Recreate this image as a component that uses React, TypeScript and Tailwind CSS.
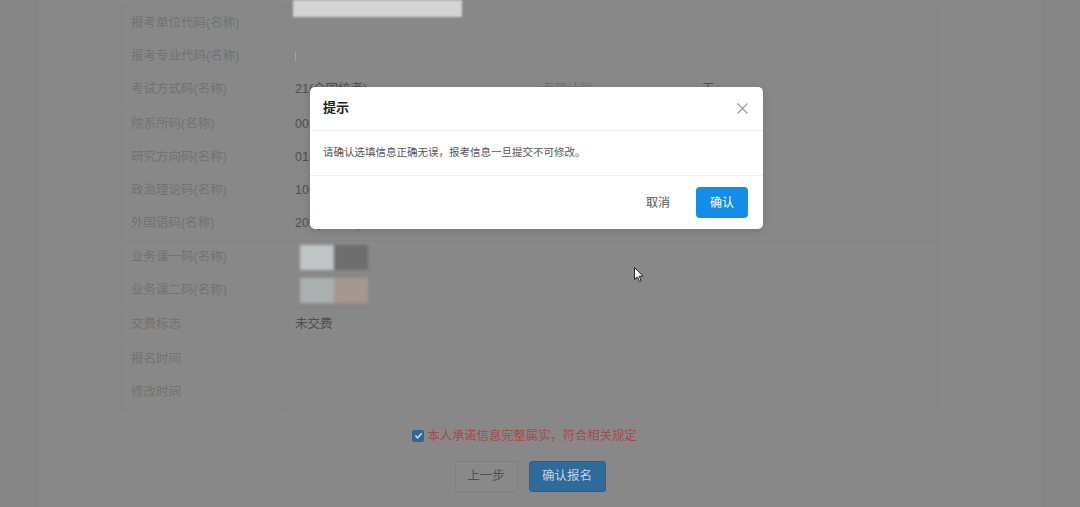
import React from "react";

type Row = { label: string; value?: React.ReactNode; label2?: string; value2?: string };

const groups: Row[][] = [
  [
    { label: "报考单位代码(名称)" },
    { label: "报考专业代码(名称)", value: <span className="inline-block w-px h-[9px] bg-[#a5a5a5] align-middle" /> },
    { label: "考试方式码(名称)", value: "21(全国统考)", label2: "专项计划", value2: "无" },
  ],
  [
    { label: "院系所码(名称)", value: "001(计算机学院)" },
    { label: "研究方向码(名称)", value: "01(不区分研究方向)" },
    { label: "政治理论码(名称)", value: "101(思想政治理论)" },
    { label: "外国语码(名称)", value: "201(英语一)" },
  ],
  [
    { label: "业务课一码(名称)", value: <Masked a="bg-[#bfc4c4]" b="bg-[#6e6e6e]" /> },
    { label: "业务课二码(名称)", value: <Masked a="bg-[#aab0b0]" b="bg-[#a69890]" /> },
  ],
  [{ label: "交费标志", value: "未交费" }],
  [{ label: "报名时间" }, { label: "修改时间" }],
];

function Masked({ a, b }: { a: string; b: string }) {
  return (
    <span className="flex h-[25px] ml-[5px] blur-[1.5px]">
      <span className={`w-[34px] h-full ${a}`} />
      <span className={`w-[34px] h-full ${b}`} />
    </span>
  );
}

export default function App() {
  return (
    <div className="relative w-full h-[507px] overflow-hidden bg-[#868686] font-['Liberation_Sans','Noto_Sans_CJK_SC',sans-serif]">
      <div className="ml-[37px] w-[1006px] h-full bg-[#888888] border-x border-[#848484] pl-[83px] pt-[6px]">
        <div className="w-[817px] border-t border-l border-r border-[#838383]">
          {groups.map((g, gi) => (
            <div key={gi} className="border-b border-[#838383]">
              {g.map((r) => (
                <div key={r.label} className="grid grid-cols-[162px_248px_160px_1fr] h-[33.15px] items-center">
                  <div className="pl-[9px] text-[12.5px] text-[#727272] border-r border-[#868686] h-full flex items-center">{r.label}</div>
                  <div className="pl-[11px] text-[12.5px] text-[#4e4e4e] flex items-center">{r.value}</div>
                  <div className="pl-[10px] text-[12.5px] text-[#747474]">{r.label2}</div>
                  <div className="pl-[10px] text-[12.5px] text-[#4e4e4e]">{r.value2}</div>
                </div>
              ))}
            </div>
          ))}
        </div>

        <div className="w-[817px] flex flex-col items-center">
          <label className="mt-[17px] flex items-center gap-[3px] text-[12.3px] text-[#a44b4b] ml-[-10px]">
            <span className="w-[12px] h-[12px] rounded-[2px] bg-[#2c679a] flex items-center justify-center">
              <svg width="9" height="9" viewBox="0 0 10 10" fill="none">
                <path d="M1.5 5.2 L4 7.6 L8.6 2.6" stroke="#c9d3dc" strokeWidth="1.8" />
              </svg>
            </span>
            本人承诺信息完整属实，符合相关规定
          </label>
          <div className="mt-[16px] flex gap-[11px] ml-[1px]">
            <button className="w-[63px] h-[31px] border border-[#7f7f7f] bg-[#898989] text-[12.5px] text-[#505050] rounded-[2px]">
              上一步
            </button>
            <button className="w-[77px] h-[31px] border border-[#28608e] bg-[#2d6b9c] text-[12.5px] text-[#c5d2dd] rounded-[3px]">
              确认报名
            </button>
          </div>
        </div>
      </div>

      {/* privacy blur at top */}
      <div className="absolute left-[293px] top-0 w-[169px] h-[17px] bg-[#d4d4d4] blur-[1px]" />

      {/* modal */}
      <div className="absolute left-[310px] top-[87px] w-[453px] h-[142px] bg-white rounded-[5px] shadow-[0_2px_8px_rgba(0,0,0,0.15)] flex flex-col">
        <div className="h-[44px] flex items-center justify-between pl-[13px] pr-[15px] pb-[2px] border-b border-[#ececec]">
          <span className="text-[13px] font-bold text-[#222]">提示</span>
          <svg width="11" height="11" viewBox="0 0 11 11" fill="none" className="mt-[1px]">
            <path d="M0.5 0.5 L10.5 10.5 M10.5 0.5 L0.5 10.5" stroke="#9a9a9a" strokeWidth="1.1" />
          </svg>
        </div>
        <div className="h-[45px] flex items-center pl-[13px] text-[10.5px] text-[#555] border-b border-[#efefef]">
          请确认选填信息正确无误，报考信息一旦提交不可修改。
        </div>
        <div className="flex-1 flex items-center justify-end pr-[15px] gap-[13px]">
          <button className="w-[50px] h-[31px] text-[12px] text-[#555]">取消</button>
          <button className="w-[52px] h-[31px] rounded-[4px] bg-[#138ee8] text-[12px] text-white">确认</button>
        </div>
      </div>

      {/* mouse cursor */}
      <svg className="absolute left-[634px] top-[267px]" width="10" height="16" viewBox="0 0 10 16">
        <path d="M0.5 0.5 L0.5 12.5 L3.4 9.8 L5.4 14.5 L7.1 13.8 L5.2 9.2 L9 9.2 Z" fill="#fff" stroke="#222" strokeWidth="1" />
      </svg>
    </div>
  );
}
